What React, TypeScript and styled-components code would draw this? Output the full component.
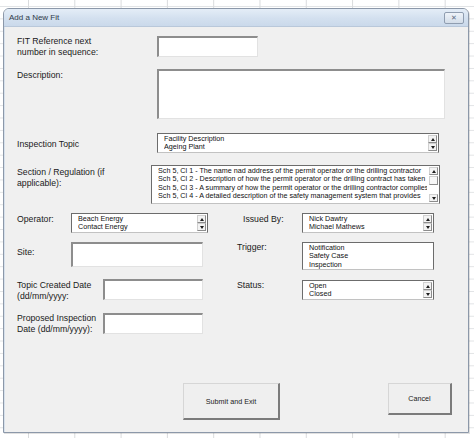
import React from 'react';
import styled, { createGlobalStyle } from 'styled-components';

const GlobalStyle = createGlobalStyle`
  html, body {
    margin: 0;
    height: 100%;
  }
  body {
    background-color: #ffffff;
    background-image:
      linear-gradient(to right, #d9dbdd 1px, transparent 1px),
      linear-gradient(to bottom, #e1e3e5 1px, transparent 1px);
    background-size: 46.3px 12.4px;
    background-position: 28px 6px;
    font-family: "Liberation Sans", Arial, sans-serif;
  }
`;

const Page = styled.div`
  padding: 8px 0 0 3px;
`;

const Dialog = styled.div`
  width: 466px;
  height: 425px;
  box-sizing: border-box;
  display: flex;
  flex-direction: column;
  background: #f0f0f0;
  border: 1px solid #8c98a9;
  border-radius: 6px 6px 0 0;
  overflow: hidden;
  box-shadow: 1px 1px 0 rgba(0, 0, 0, 0.12);
`;

const TitleBar = styled.div`
  height: 17px;
  flex: none;
  display: flex;
  align-items: center;
  justify-content: space-between;
  padding: 0 4px 0 5px;
  background: linear-gradient(to bottom, #e4edf7 0%, #d3e0ef 55%, #cad9eb 100%);
  border-bottom: 1px solid #b9c8da;
`;

const Title = styled.span`
  font-size: 8px;
  color: #2f3a48;
`;

const CloseButton = styled.div`
  width: 18px;
  height: 10px;
  display: flex;
  align-items: center;
  justify-content: center;
  border: 1px solid #8f9db0;
  border-radius: 2px;
  background: linear-gradient(to bottom, #eef3f9, #d3dde9);
  font-size: 7px;
  line-height: 1;
  color: #5d6b80;
`;

const Content = styled.div`
  flex: 1;
  display: flex;
  flex-direction: column;
  padding: 9px 0 0 12px;
  border-left: 1px solid #d7e1ec;
`;

const Row = styled.div<{ $top: number }>`
  display: flex;
  align-items: flex-start;
  margin-top: ${p => p.$top}px;
`;

const Half = styled.div<{ $w?: number }>`
  display: flex;
  align-items: flex-start;
  width: ${p => (p.$w ? `${p.$w}px` : 'auto')};
`;

const Label = styled.div<{ $w: number; $pt?: number; $pl?: number }>`
  width: ${p => p.$w}px;
  box-sizing: border-box;
  padding-top: ${p => p.$pt ?? 0}px;
  padding-left: ${p => p.$pl ?? 0}px;
  font-size: 8.7px;
  line-height: 11px;
  color: #1a1a1a;
  flex: none;
`;

const TextBox = styled.div<{ $w: number; $h: number }>`
  width: ${p => p.$w}px;
  height: ${p => p.$h}px;
  box-sizing: border-box;
  background: #ffffff;
  border-top: 2px solid #8d8d8d;
  border-left: 2px solid #8d8d8d;
  border-right: 1px solid #e2e2e2;
  border-bottom: 1px solid #e2e2e2;
  flex: none;
`;

const ListBox = styled.div<{ $w: number; $h: number; $mt?: number }>`
  width: ${p => p.$w}px;
  height: ${p => p.$h}px;
  margin-top: ${p => p.$mt ?? 0}px;
  box-sizing: border-box;
  display: flex;
  background: #ffffff;
  border: 1px solid #6c6c6c;
  border-bottom-color: #c2c2c2;
  overflow: hidden;
  flex: none;
`;

const Items = styled.div`
  flex: 1;
  min-width: 0;
  padding: 0.5px 2px 0 6px;
  overflow: hidden;
`;

const Item = styled.div`
  white-space: nowrap;
  overflow: hidden;
  font-size: 7.2px;
  line-height: 8.6px;
  color: #111111;
`;

const ScrollBar = styled.div`
  width: 9px;
  flex: none;
  display: flex;
  flex-direction: column;
  justify-content: space-between;
  padding: 1px 1px 1px 0;
`;

const ArrowButton = styled.div`
  height: 8px;
  box-sizing: border-box;
  display: flex;
  align-items: center;
  justify-content: center;
  background: #f3f3f3;
  border: 1px solid #8c8c8c;
  border-top-color: #d0d0d0;
  border-left-color: #d0d0d0;
`;

const Arrow = styled.span<{ $dir: 'up' | 'down' }>`
  width: 0;
  height: 0;
  border-left: 2.5px solid transparent;
  border-right: 2.5px solid transparent;
  ${p =>
    p.$dir === 'up'
      ? 'border-bottom: 3px solid #1e1e1e;'
      : 'border-top: 3px solid #1e1e1e;'}
`;

const Thumb = styled.div`
  height: 9px;
  box-sizing: border-box;
  margin-top: 1px;
  background: #f7f7f7;
  border: 1px solid #8c8c8c;
  border-top-color: #d0d0d0;
  border-left-color: #d0d0d0;
`;

const Track = styled.div`
  flex: 1;
`;

const ButtonRow = styled.div`
  display: flex;
  align-items: flex-start;
  margin-top: 48px;
  padding-left: 166px;
`;

const Button = styled.button<{ $w: number; $h: number; $ml?: number }>`
  width: ${p => p.$w}px;
  height: ${p => p.$h}px;
  margin-left: ${p => p.$ml ?? 0}px;
  box-sizing: border-box;
  padding: 0;
  background: #efefef;
  border-top: 1px solid #d6d6d6;
  border-left: 1px solid #d6d6d6;
  border-right: 2px solid #7b7b7b;
  border-bottom: 2px solid #7b7b7b;
  font-family: "Liberation Sans", Arial, sans-serif;
  font-size: 7.2px;
  color: #1a1a1a;
  flex: none;
`;

type ListProps = {
  w: number;
  h: number;
  mt?: number;
  items: string[];
  scroll?: 'pair' | 'thumb';
};

const List = ({ w, h, mt, items, scroll }: ListProps) => (
  <ListBox $w={w} $h={h} $mt={mt}>
    <Items>
      {items.map(item => (
        <Item key={item}>{item}</Item>
      ))}
    </Items>
    {scroll && (
      <ScrollBar>
        <ArrowButton>
          <Arrow $dir="up" />
        </ArrowButton>
        {scroll === 'thumb' && (
          <>
            <Thumb />
            <Track />
          </>
        )}
        <ArrowButton>
          <Arrow $dir="down" />
        </ArrowButton>
      </ScrollBar>
    )}
  </ListBox>
);

const sections = [
  'Sch 5, Cl 1 - The name nad address of the permit operator or the drilling contractor',
  'Sch 5, Cl 2 - Description of how the permit operator or the drilling contract has taken',
  'Sch 5, Cl 3 - A summary of how the permit operator or the drilling contractor complies',
  'Sch 5, Cl 4 - A detailed description of the safety management system that provides',
];

export default function App() {
  return (
    <>
      <GlobalStyle />
      <Page>
        <Dialog>
          <TitleBar>
            <Title>Add a New Fit</Title>
            <CloseButton>✕</CloseButton>
          </TitleBar>
          <Content>
            <Row $top={0}>
              <Label $w={140}>
                FIT Reference next
                <br />
                number in sequence:
              </Label>
              <TextBox $w={101} $h={21} />
            </Row>

            <Row $top={11}>
              <Label $w={140} $pt={1}>
                Description:
              </Label>
              <TextBox $w={288} $h={50} />
            </Row>

            <Row $top={14}>
              <Label $w={140} $pt={6}>
                Inspection Topic
              </Label>
              <List w={282} h={20} items={['Facility Description', 'Ageing Plant']} scroll="pair" />
            </Row>

            <Row $top={12}>
              <Label $w={134} $pt={2}>
                Section / Regulation (if
                <br />
                applicable):
              </Label>
              <List w={289} h={39} items={sections} scroll="thumb" />
            </Row>

            <Row $top={9}>
              <Half $w={220}>
                <Label $w={54} $pt={1}>
                  Operator:
                </Label>
                <List w={137} h={20} items={['Beach Energy', 'Contact Energy']} scroll="pair" />
              </Half>
              <Half>
                <Label $w={65} $pt={1} $pl={6}>
                  Issued By:
                </Label>
                <List w={132} h={20} items={['Nick Dawtry', 'Michael Mathews']} scroll="pair" />
              </Half>
            </Row>

            <Row $top={9}>
              <Half $w={220}>
                <Label $w={54} $pt={5}>
                  Site:
                </Label>
                <TextBox $w={132} $h={25} />
              </Half>
              <Half>
                <Label $w={65} $pt={0}>
                  Trigger:
                </Label>
                <List w={132} h={28} items={['Notification', 'Safety Case', 'Inspection']} />
              </Half>
            </Row>

            <Row $top={9}>
              <Half $w={220}>
                <Label $w={86} $pt={1}>
                  Topic Created Date
                  <br />
                  (dd/mm/yyyy:
                </Label>
                <TextBox $w={100} $h={21} />
              </Half>
              <Half>
                <Label $w={65} $pt={1}>
                  Status:
                </Label>
                <List w={132} h={20} mt={1} items={['Open', 'Closed']} scroll="pair" />
              </Half>
            </Row>

            <Row $top={11}>
              <Label $w={86} $pt={0}>
                Proposed Inspection
                <br />
                Date (dd/mm/yyyy):
              </Label>
              <TextBox $w={100} $h={21} />
            </Row>

            <ButtonRow>
              <Button $w={97} $h={37}>
                Submit and Exit
              </Button>
              <Button $w={64} $h={32} $ml={108}>
                Cancel
              </Button>
            </ButtonRow>
          </Content>
        </Dialog>
      </Page>
    </>
  );
}
